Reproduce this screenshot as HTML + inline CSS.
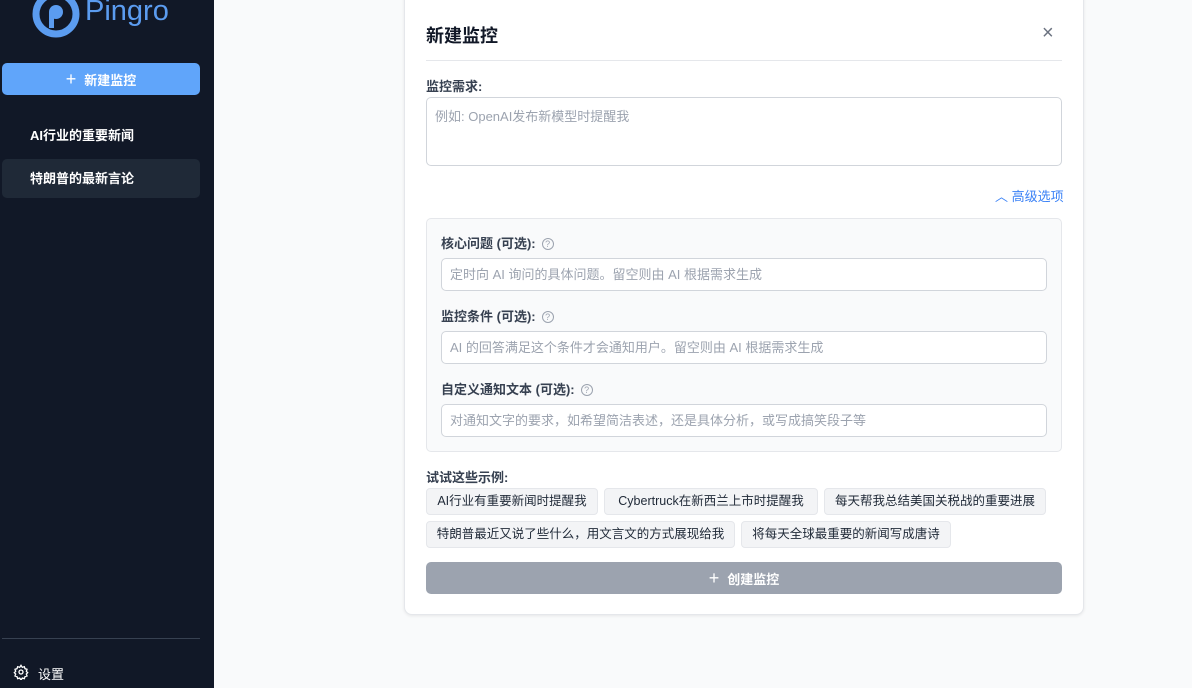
<!DOCTYPE html>
<html><head><meta charset="utf-8"><style>
*{box-sizing:border-box;margin:0;padding:0}
body{width:1192px;height:688px;overflow:hidden;background:#f9fafb;font-family:"Liberation Sans","Noto Sans CJK SC",sans-serif;position:relative;color:#1f2937}
.sb{position:absolute;left:0;top:0;width:214px;height:688px;background:#111827}
.a{position:absolute}
.btn{left:2px;top:63px;width:198px;height:32px;background:#60a5fa;border-radius:5px;color:#fff;font-size:13px;font-weight:bold;display:flex;align-items:center;justify-content:center;gap:8px}
.item{left:2px;width:198px;height:39px;border-radius:5px;color:#fff;font-size:13px;font-weight:bold;padding-left:28px;line-height:39px}
.card{left:404px;top:-10px;width:680px;height:625px;background:#fff;border:1px solid #e5e7eb;border-radius:8px;box-shadow:0 1px 3px rgba(0,0,0,.08)}
.lbl{font-size:13px;font-weight:bold;color:#374151}
.inp{border:1px solid #d1d5db;border-radius:5px;background:#fff;font-size:13px;color:#9ca3af;padding-left:8px}
.q{display:inline-block;width:12px;height:12px;border:1px solid #9ca3af;border-radius:50%;font-size:9px;line-height:10px;text-align:center;color:#9ca3af;font-weight:normal;margin-left:6px;vertical-align:1px}
.chip{position:absolute;height:27px;background:#f3f4f6;border:1px solid #e5e7eb;border-radius:4px;font-size:12.5px;color:#1f2937;line-height:25px;text-align:center;white-space:nowrap;overflow:hidden}
</style></head><body>
<div class="sb">
 <svg class="a" style="left:32px;top:-10px" width="48" height="48" viewBox="0 0 48 48"><circle cx="24" cy="24" r="20" fill="none" stroke="#5b9cf0" stroke-width="7"/><circle cx="24" cy="22" r="7" fill="#5b9cf0"/><rect x="17" y="22" width="5" height="16" fill="#5b9cf0"/></svg>
 <div class="a" style="left:85px;top:-5px;color:#5b9cf0;font-size:29px">Pingro</div>
 <div class="a btn"><span style="font-size:18px;font-weight:normal">+</span>新建监控</div>
 <div class="a item" style="top:116px">AI行业的重要新闻</div>
 <div class="a item" style="top:159px;background:#1f2937">特朗普的最新言论</div>
 <div class="a" style="left:2px;top:638px;width:198px;height:1px;background:#374151"></div>
 <svg class="a" style="left:13px;top:664px" width="16" height="16" viewBox="0 0 24 24" fill="none" stroke="#fff" stroke-width="2"><circle cx="12" cy="12" r="3"/><path d="M12 2l2 3 3-1 1 3 3 1-1 3 2 2-2 2 1 3-3 1-1 3-3-1-2 3-2-3-3 1-1-3-3-1 1-3-2-2 2-2-1-3 3-1 1-3 3 1z"/></svg>
 <div class="a" style="left:38px;top:664px;color:#fff;font-size:13px">设置</div>
</div>
<div class="a card"></div>
<div class="a" style="left:426px;top:22px;font-size:18px;font-weight:bold;color:#111827">新建监控</div>
<div class="a" style="left:1042px;top:22px;font-size:20px;color:#6b7280;font-weight:300">×</div>
<div class="a" style="left:426px;top:60px;width:636px;height:1px;background:#e5e7eb"></div>
<div class="a lbl" style="left:426px;top:76px">监控需求:</div>
<div class="a inp" style="left:426px;top:97px;width:636px;height:69px;padding-top:8px">例如: OpenAI发布新模型时提醒我</div>
<div class="a" style="left:995px;top:186px;font-size:13px;color:#3b82f6">︿ 高级选项</div>
<div class="a" style="left:426px;top:218px;width:636px;height:234px;background:#f9fafb;border:1px solid #e5e7eb;border-radius:5px"></div>
<div class="a lbl" style="left:441px;top:233px">核心问题 (可选):<span class="q">?</span></div>
<div class="a inp" style="left:441px;top:258px;width:606px;height:33px;line-height:31px">定时向 AI 询问的具体问题。留空则由 AI 根据需求生成</div>
<div class="a lbl" style="left:441px;top:306px">监控条件 (可选):<span class="q">?</span></div>
<div class="a inp" style="left:441px;top:331px;width:606px;height:33px;line-height:31px">AI 的回答满足这个条件才会通知用户。留空则由 AI 根据需求生成</div>
<div class="a lbl" style="left:441px;top:379px">自定义通知文本 (可选):<span class="q">?</span></div>
<div class="a inp" style="left:441px;top:404px;width:606px;height:33px;line-height:31px">对通知文字的要求，如希望简洁表述，还是具体分析，或写成搞笑段子等</div>
<div class="a lbl" style="left:426px;top:467px">试试这些示例:</div>
<div class="chip" style="left:426px;top:488px;width:172px">AI行业有重要新闻时提醒我</div>
<div class="chip" style="left:604px;top:488px;width:214px">Cybertruck在新西兰上市时提醒我</div>
<div class="chip" style="left:824px;top:488px;width:222px">每天帮我总结美国关税战的重要进展</div>
<div class="chip" style="left:426px;top:521px;width:309px">特朗普最近又说了些什么，用文言文的方式展现给我</div>
<div class="chip" style="left:741px;top:521px;width:210px">将每天全球最重要的新闻写成唐诗</div>
<div class="a" style="left:426px;top:562px;width:636px;height:32px;background:#9ca3af;border-radius:5px;color:#fff;font-size:13px;font-weight:bold;display:flex;align-items:center;justify-content:center;gap:8px"><span style="font-size:18px;font-weight:normal">+</span>创建监控</div>
</body></html>
